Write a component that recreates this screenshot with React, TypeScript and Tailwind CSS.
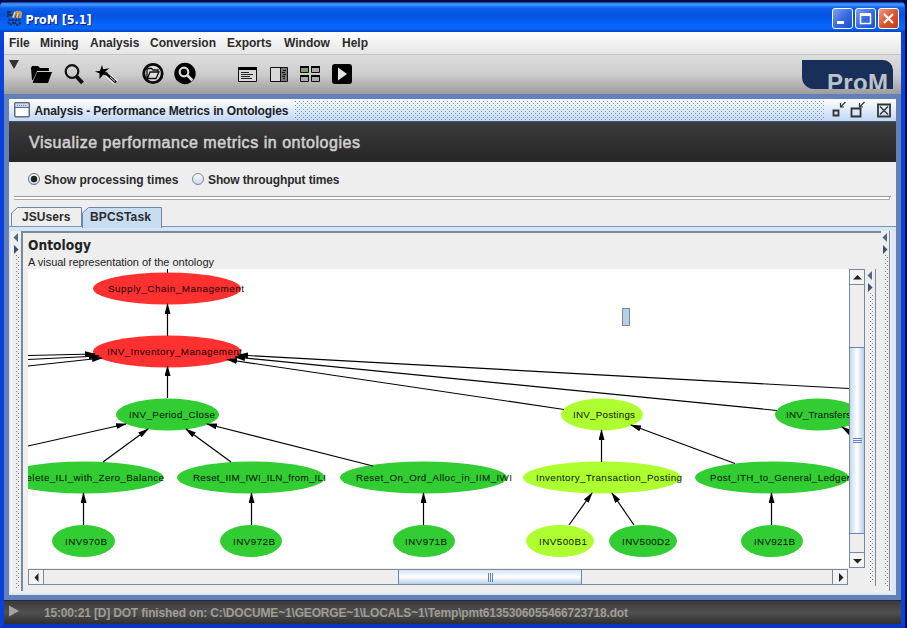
import type { ReactNode } from "react"

type Node = { label: string; cx: number; cy: number; rx: number; tx: number; tw: number; fill: string }

const RED = "#ff3030"
const GREEN = "#32cd32"
const LIME = "#adff2f"

const nodes: Node[] = [
    { label: "Supply_Chain_Management", cx: 167, cy: 288.5, rx: 74, tx: 108, tw: 136, fill: RED },
    { label: "INV_Inventory_Management", cx: 167, cy: 351.5, rx: 74, tx: 107, tw: 135, fill: RED },
    { label: "INV_Period_Close", cx: 167.5, cy: 414.5, rx: 51.5, tx: 129, tw: 86, fill: GREEN },
    { label: "INV_Postings", cx: 602, cy: 414.5, rx: 41, tx: 573, tw: 62, fill: LIME },
    { label: "INV_Transfers", cx: 818, cy: 414.5, rx: 43, tx: 786, tw: 65, fill: GREEN },
    { label: "Delete_ILI_with_Zero_Balance", cx: 83.5, cy: 477.5, rx: 80, tx: 19, tw: 145, fill: GREEN },
    { label: "Reset_IIM_IWI_ILN_from_ILI", cx: 251, cy: 477.5, rx: 74, tx: 193, tw: 133, fill: GREEN },
    { label: "Reset_On_Ord_Alloc_in_IIM_IWI", cx: 423.5, cy: 477.5, rx: 83.5, tx: 356, tw: 156, fill: GREEN },
    { label: "Inventory_Transaction_Posting", cx: 602, cy: 477.5, rx: 79, tx: 536, tw: 146, fill: LIME },
    { label: "Post_ITH_to_General_Ledger", cx: 772, cy: 477.5, rx: 77, tx: 710, tw: 140, fill: GREEN },
    { label: "INV970B", cx: 83.5, cy: 541, rx: 31.5, tx: 65, tw: 42, fill: GREEN },
    { label: "INV972B", cx: 251, cy: 541, rx: 31, tx: 233, tw: 42, fill: GREEN },
    { label: "INV971B", cx: 424, cy: 541, rx: 31, tx: 405, tw: 42, fill: GREEN },
    { label: "INV500B1", cx: 560, cy: 541, rx: 34, tx: 539, tw: 48, fill: LIME },
    { label: "INV500D2", cx: 643, cy: 541, rx: 34, tx: 622, tw: 48, fill: GREEN },
    { label: "INV921B", cx: 772, cy: 541, rx: 31, tx: 754, tw: 41, fill: GREEN },
]

// x1, y1 -> x2, y2 (arrow head at the second point)
const edges = [
    [167.5, 336, 167.5, 304],
    [167.5, 398, 167.5, 366],
    [28, 355.5, 95, 354],
    [28, 359.5, 99, 356],
    [28, 366, 102, 358],
    [849, 388.5, 238, 355],
    [777, 410.5, 235, 357],
    [564, 409.5, 227, 359.5],
    [28, 446, 126, 424],
    [103, 462, 148, 429],
    [231, 462, 186, 429],
    [373, 466, 207, 424],
    [83.5, 525, 83.5, 493],
    [251.5, 525, 251.5, 493],
    [423.5, 525, 423.5, 493],
    [771.5, 525, 771.5, 493],
    [569, 525, 592, 493],
    [634, 525, 612, 493],
    [601.5, 462, 601.5, 430],
    [735, 463.5, 631, 425],
    [856, 436, 842, 427],
]

const menus = [
    { label: "File", cls: "w-[31px]" },
    { label: "Mining", cls: "w-[50px]" },
    { label: "Analysis", cls: "w-[60px]" },
    { label: "Conversion", cls: "w-[77px]" },
    { label: "Exports", cls: "w-[57px]" },
    { label: "Window", cls: "w-[58px]" },
    { label: "Help", cls: "w-[40px]" },
]

function Graph() {
    return (
        <svg className="block h-[299px] w-[821px] bg-white" viewBox="28 269 821 299">
            <defs>
                <marker id="arrow" markerUnits="userSpaceOnUse" markerWidth="11" markerHeight="7" refX="10" refY="3" orient="auto">
                    <path d="M0 0 L11 3 L0 6 Z" fill="#000" />
                </marker>
            </defs>
            {nodes.map((n) => (
                <ellipse key={n.label} cx={n.cx} cy={n.cy} rx={n.rx} ry={16} fill={n.fill} />
            ))}
            <path d="M167.5 269v4" stroke="#000" />
            {edges.map(([x1, y1, x2, y2], i) => (
                <line key={i} x1={x1} y1={y1} x2={x2} y2={y2} stroke="#000" strokeWidth="1.2" markerEnd="url(#arrow)" />
            ))}
            {nodes.map((n) => (
                <text key={n.label} x={n.tx} y={n.cy + 3.5} textLength={n.tw} fontSize="9.8" fill="#000" fillOpacity="0.85" stroke="#000" strokeOpacity="0.35" strokeWidth="0.3">
                    {n.label}
                </text>
            ))}
            <rect x="622.5" y="308.5" width="7" height="17" fill="#b8cfe5" stroke="#7389ab" />
        </svg>
    )
}

function XpButton({ close, children }: { close?: boolean; children: ReactNode }) {
    return (
        <div
            className={
                close
                    ? "h-[21px] w-[21px] rounded-[3px] border border-white bg-linear-to-br from-[#ee9a80] via-[#dd5530] to-[#c03c14]"
                    : "h-[21px] w-[21px] rounded-[3px] border border-white bg-linear-to-br from-[#7da2ee] via-[#3a6be0] to-[#1b4fd0]"
            }
        >
            <svg className="block" width="19" height="19" fill="none" stroke="#fff">
                {children}
            </svg>
        </div>
    )
}

function TitleBar() {
    return (
        <div className="flex h-8 items-center bg-[linear-gradient(#0a0a44_0,#0a0a44_2px,#2a83f5_3px,#3f95ff_5px,#0a60ea_8px,#0553e0_15px,#0560f4_22px,#0668fe_28px,#0450d8_31px,#0340b8_32px)] pt-[5px] pr-[6px] pl-[7px]">
            <svg width="15" height="17" className="mt-[-1px] block">
                <path d="M1 1v6M1 2h3M1.500 5h4" stroke="#1b2b50" strokeWidth="1.500" />
                <path d="M6 8 8 3l2-1 1 1-1 5M10 4l3-2 1 1-1 5" stroke="#c99c50" strokeWidth="2.500" fill="none" />
                <path d="M6 7 8 2M10 7l1-4" stroke="#f4d99a" strokeWidth="1" />
                <circle cx="4" cy="12" r="2.500" fill="none" stroke="#142a56" strokeWidth="2" strokeDasharray="2 1" />
                <circle cx="10.500" cy="12.500" r="2.500" fill="none" stroke="#142a56" strokeWidth="2" strokeDasharray="2 1" />
            </svg>
            <svg width="68" height="16" className="ml-[3px] block overflow-visible text-[13px] font-bold [font-family:'DejaVu_Sans_Condensed','DejaVu_Sans',sans-serif] [text-shadow:1px_1px_1px_#0a1883]">
                <text x="0.5" y="12.5" textLength="66" lengthAdjust="spacingAndGlyphs" fill="#fff">ProM [5.1]</text>
            </svg>
            <div className="ml-auto flex gap-[2px]">
                <XpButton>
                    <path d="M4 13.500h7" strokeWidth="3" />
                </XpButton>
                <XpButton>
                    <path d="M4.500 5v9.500h10V5" strokeWidth="1.500" />
                    <path d="M4 5.500h11" strokeWidth="3" />
                </XpButton>
                <XpButton close>
                    <path d="m5 5 9 9M14 5l-9 9" strokeWidth="2.200" />
                </XpButton>
            </div>
        </div>
    )
}

function Toolbar() {
    return (
        <div className="flex h-10 items-start justify-between border-t border-[#c4c4c4] bg-linear-to-b from-[#dedede] via-[#cccccc] to-[#9d9d9d]">
            <svg width="360" height="39" viewBox="4 55 360 39" className="block">
                <path d="M9 60h10l-5 9z" fill="#333" />
                {/* open folder */}
                <path d="M31 68l1-2h6l2 2h9v3H37l-4 9h-1z" />
                <path d="M37 72h15l-4 11H32.500z" />
                {/* magnifier */}
                <circle cx="72" cy="71.500" r="6.300" fill="none" stroke="#111" strokeWidth="2.200" />
                <path d="m76.500 76.500 6 6.500" stroke="#111" strokeWidth="4" />
                {/* wand */}
                <path d="m102 65 1.200 4.300 6.200-1-4.700 3.700 3.200 4-4.500-1.500-4 4.500.2-5.500-4.600-2 5-.8z" />
                <path d="m107 74.500 9 8" stroke="#fff" strokeWidth="5" />
                <path d="m105 72.500 11 10" stroke="#111" strokeWidth="3" />
                <path d="m110 77 5 4.500" stroke="#ddd" strokeWidth="1" />
                {/* round folder */}
                <circle cx="153" cy="73.500" r="9.200" fill="#ddd" stroke="#0a0a0a" strokeWidth="2.800" />
                <path d="M147 78v-8.500l1-1h3.500l1.500 1.500h5V72M147.500 78.500h8.500l3-6.500h-9z" fill="none" stroke="#111" strokeWidth="1.300" />
                {/* round magnifier */}
                <circle cx="185" cy="73.500" r="10.700" />
                <circle cx="184" cy="72" r="4.300" fill="none" stroke="#ddd" strokeWidth="2.200" />
                <path d="m187.500 75.500 5 5" stroke="#ddd" strokeWidth="2.600" />
                {/* text panel */}
                <path d="M238.500 68.500h18v13h-18z" fill="#d8d8d8" stroke="#111" />
                <path d="M238 68.500h19" stroke="#000" strokeWidth="3" />
                <path d="M241 72.500h8M241 74.500h12M241 76.500h9M241 78.500h11" stroke="#222" />
                {/* side panel */}
                <path d="M270.500 67.500h17v14h-17z" fill="#d8d8d8" stroke="#111" />
                <path d="M281 68h6v13h-6z" fill="#777" />
                <path d="M280.500 67v15M283 70.500h3M282 72.500h3M283 74.500h3M282 76.500h3M283 78.500h2" stroke="#111" />
                {/* tiles */}
                <path d="M300.500 66.500h8v6h-8z" fill="#7f9f68" stroke="#111" />
                <path d="M311.500 66.500h8v6h-8zM300.500 75.500h8v6h-8zM311.500 75.500h8v6h-8z" fill="#aaa" stroke="#111" />
                <path d="M300 67h9M311 67h9M300 76h9M311 76h9" stroke="#000" strokeWidth="2" />
                {/* play */}
                <rect x="332" y="64" width="20" height="20" rx="3" />
                <path d="M338 67.500v13l9-6.500z" fill="#e4e4e4" />
            </svg>
            <div className="mt-[5px] mr-2 h-[29px] w-[91px] overflow-hidden rounded-tr-[10px] rounded-bl-[12px] bg-[#172f59]">
                <svg width="91" height="29" className="block">
                    <text x="25" y="31" textLength="61" fontSize="24" fontWeight="bold" fill="#bdc2c9">ProM</text>
                </svg>
            </div>
        </div>
    )
}

function FrameTitle() {
    return (
        <div className="flex h-[23px] items-center border-b border-[#3a5379] bg-linear-to-b from-[#fdfeff] via-[#dfebfa] to-[#c2d7f2] pr-[5px] pl-[5px]">
            <svg width="16" height="16" className="block">
                <rect x="0.750" y="0.750" width="14.500" height="14" rx="1" fill="#fff" stroke="#5d6b7c" strokeWidth="1.500" />
                <path d="M2 2h12v3H2z" fill="#c5d9f0" />
                <path d="M3 3.500h10" stroke="#6382bf" strokeDasharray="1 1" />
                <path d="M1 5.500h14" stroke="#5d6b7c" />
            </svg>
            <svg width="261" height="16" className="ml-[4px] block">
                <text x="0.5" y="12.5" textLength="254" fontSize="12" fontWeight="bold" fill="#222">Analysis - Performance Metrics in Ontologies</text>
            </svg>
            <svg className="block h-[19px] w-0 flex-1">
                <defs>
                    <pattern id="grip" width="4" height="4" patternUnits="userSpaceOnUse">
                        <path d="M0 0h1v1H0zM2 2h1v1H2z" fill="#6f92c8" />
                    </pattern>
                </defs>
                <rect width="100%" height="19" fill="url(#grip)" />
            </svg>
            <svg width="66" height="20" className="ml-[1px] block" fill="none" stroke="#333">
                <path d="M8.500 10.500h5v5h-5z" strokeWidth="1.800" />
                <path d="m20.500 2-5 5M15.500 3v4H19" strokeWidth="1.200" />
                <path d="M26.500 8.500h9v8h-9z" strokeWidth="1.800" />
                <path d="m39.500 2-5 5M34.500 3v4H38" strokeWidth="1.200" />
                <path d="M53 4.500h12v12H53z" strokeWidth="1.800" />
                <path d="m55 6.500 8 8M63 6.500l-8 8" strokeWidth="1.400" />
            </svg>
        </div>
    )
}

function Options() {
    return (
        <div className="h-[45px] px-[5px]">
            <div className="flex h-[35px] items-center border-b border-[#999] pl-[14px]">
                <svg width="322" height="20" className="block">
                    <defs>
                        <linearGradient id="radio" x2="0" y2="1">
                            <stop stopColor="#fff" />
                            <stop offset="1" stopColor="#c3d6ec" />
                        </linearGradient>
                    </defs>
                    <circle cx="6" cy="10" r="5.500" fill="url(#radio)" stroke="#5e7186" />
                    <circle cx="6" cy="10" r="3.200" fill="#222" />
                    <text x="16" y="15" textLength="134.500" fontSize="12" fontWeight="bold" fill="#2b2b2b">Show processing times</text>
                    <circle cx="170" cy="10" r="5.500" fill="url(#radio)" stroke="#7a8a99" />
                    <text x="180" y="15" textLength="131.500" fontSize="12" fontWeight="bold" fill="#2b2b2b">Show throughput times</text>
                </svg>
            </div>
            <div className="h-[3px] w-[876px] border-r border-b border-[#aaa] bg-white" />
        </div>
    )
}

function Tabs() {
    return (
        <svg width="887" height="24" viewBox="9 207 887 24" className="block">
            <path d="M9 226.500h73M161 226.500h735" stroke="#7a94b5" />
            <path d="M9 227h887v4H9z" fill="#d6e5f4" />
            <path d="M11.500 226v-13l6-5.500h64V226" fill="#eee" stroke="#6f87a5" />
            <path d="M82.500 228v-15l6-5.500h73V228" fill="#c8ddf2" stroke="#6f87a5" />
            <text x="22" y="221" textLength="48.500" fontSize="12" fontWeight="bold" fill="#2b2b2b">JSUsers</text>
            <text x="90" y="221" textLength="61" fontSize="12" fontWeight="bold" fill="#2b2b2b">BPCSTask</text>
        </svg>
    )
}

function Divider({ id, height, className }: { id: string; height: number; className?: string }) {
    return (
        <div className={`shrink-0 ${className}`}>
            <svg width="8" height={height} className="block">
                <defs>
                    <pattern id={id} width="4" height="4" patternUnits="userSpaceOnUse">
                        <path d="M0 0h1v1H0zM2 2h1v1H2z" fill="#7f7c84" />
                    </pattern>
                </defs>
                <path d="M6 2v9L1.500 6.500z" fill="#4f6685" />
                <path d="M2 14v9l4.500-4.500z" fill="#3d5069" />
                <rect x="4" y="24" width="4" height={height - 28} fill={`url(#${id})`} />
            </svg>
        </div>
    )
}

function VScroll() {
    return (
        <div className="flex h-[299px] w-4 flex-col border border-[#7a8a99] bg-[#eee]">
            <svg width="14" height="15" className="block border-b border-[#7a8a99] bg-[#f3f3f3]">
                <path d="M3 9.500h9L7.500 5z" fill="#222" />
            </svg>
            <div className="mt-[62px] flex h-[187px] flex-col items-center justify-center gap-px border-y border-[#6382bf] bg-linear-to-r from-[#c3d8ee] via-[#ffffff] to-[#b8cfe5]">
                <div className="h-px w-[9px] bg-[#6382bf]" />
                <div className="h-px w-[9px] bg-[#6382bf]" />
                <div className="h-px w-[9px] bg-[#6382bf]" />
            </div>
            <svg width="14" height="15" className="mt-auto block border-t border-[#7a8a99] bg-[#f3f3f3]">
                <path d="M3 6h9l-4.500 4.500z" fill="#222" />
            </svg>
        </div>
    )
}

function HScroll() {
    return (
        <div className="mt-px flex h-4 w-[820px] border border-[#7a8a99] bg-[#eee]">
            <svg width="15" height="14" className="block border-r border-[#7a8a99] bg-[#f3f3f3]">
                <path d="M9.500 3v9L5.500 7.500z" fill="#222" />
            </svg>
            <div className="ml-[354px] flex w-[184px] items-center justify-center gap-px border-x border-[#6382bf] bg-linear-to-b from-[#d5e4f4] via-[#ffffff] to-[#b8cfe5]">
                <div className="h-[9px] w-px bg-[#6382bf]" />
                <div className="h-[9px] w-px bg-[#6382bf]" />
                <div className="h-[9px] w-px bg-[#6382bf]" />
            </div>
            <svg width="15" height="14" className="ml-auto block border-l border-[#7a8a99] bg-[#f3f3f3]">
                <path d="M6 3v9l4.500-4.500z" fill="#222" />
            </svg>
        </div>
    )
}

function Workspace() {
    return (
        <div className="flex h-[364px] border-r-4 border-b-2 border-l-2 border-[#dce8f3] bg-[#eee]">
            <Divider id="grip-left" height={362} className="w-[10px] border-l border-white" />
            <div className="flex h-[360px] w-[860px] flex-col border-t-2 border-l-2 border-[#7a8a99] pl-[5px]">
                <div className="h-9">
                    <svg width="300" height="36" viewBox="28 233 300 36" className="block">
                        <text x="28" y="250" textLength="63" lengthAdjust="spacingAndGlyphs" fontSize="13.5" fontWeight="bold" fill="#222" className="[font-family:'DejaVu_Sans_Condensed','DejaVu_Sans',sans-serif]">Ontology</text>
                        <text x="28" y="266" textLength="186" fontSize="11" fill="#222">A visual representation of the ontology</text>
                    </svg>
                </div>
                <div className="flex">
                    <div>
                        <Graph />
                        <HScroll />
                    </div>
                    <VScroll />
                    <Divider id="grip-graph" height={317} className="h-[317px] w-[11px] border-r border-[#7a8a99] pl-px" />
                </div>
            </div>
            <Divider id="grip-right" height={360} className="h-[360px] w-[9px] border-r border-[#7a8a99]" />
        </div>
    )
}

export default function App() {
    return (
        <div className="h-[628px] w-[907px] overflow-hidden bg-[#08084a] [font-family:'Liberation_Sans',Arial,sans-serif]">
            <div className="h-[628px] w-[905px] overflow-hidden rounded-t-[7px] bg-[#0831d9]">
                <TitleBar />
                <div className="h-[596px] border-r-4 border-b-4 border-l-4 border-t-0 border-[#0a40dc] border-b-[#0a36c8]">
                    <div className="flex h-[22px] items-center bg-linear-to-b from-[#fdfdfd] to-[#e6e6e6] pl-[5px] text-[12px] font-bold text-[#2b2b2b]">
                        {menus.map((m) => (
                            <div key={m.label} className={m.cls}>
                                {m.label}
                            </div>
                        ))}
                    </div>
                    <Toolbar />
                    <div className="h-[507px] border-b border-[#1b2a45] bg-[#6480bb] px-[5px] pt-[5px]">
                        <div className="h-[496px] bg-[#eee]">
                            <FrameTitle />
                            <div className="flex h-10 items-center bg-linear-to-b from-[#3b3b3b] to-[#262626]">
                                <svg width="360" height="24" className="block">
                                    <text x="20" y="18" textLength="331" fontSize="16" fill="#d0d0d0" stroke="#d0d0d0" strokeWidth="0.55">Visualize performance metrics in ontologies</text>
                                </svg>
                            </div>
                            <Options />
                            <Tabs />
                            <Workspace />
                        </div>
                    </div>
                    <div className="flex h-[23px] items-center bg-linear-to-b from-[#3a3a3a] via-[#505050] to-[#303030]">
                        <svg width="640" height="23" className="block">
                            <path d="M5 4.500v11l10-5.500z" fill="#a4a4a4" />
                            <text x="40" y="16" textLength="584" fontSize="12" fontWeight="bold" fill="#a09c94">
                                15:00:21 [D] DOT finished on: C:\DOCUME~1\GEORGE~1\LOCALS~1\Temp\pmt6135306055466723718.dot
                            </text>
                        </svg>
                    </div>
                </div>
            </div>
        </div>
    )
}
